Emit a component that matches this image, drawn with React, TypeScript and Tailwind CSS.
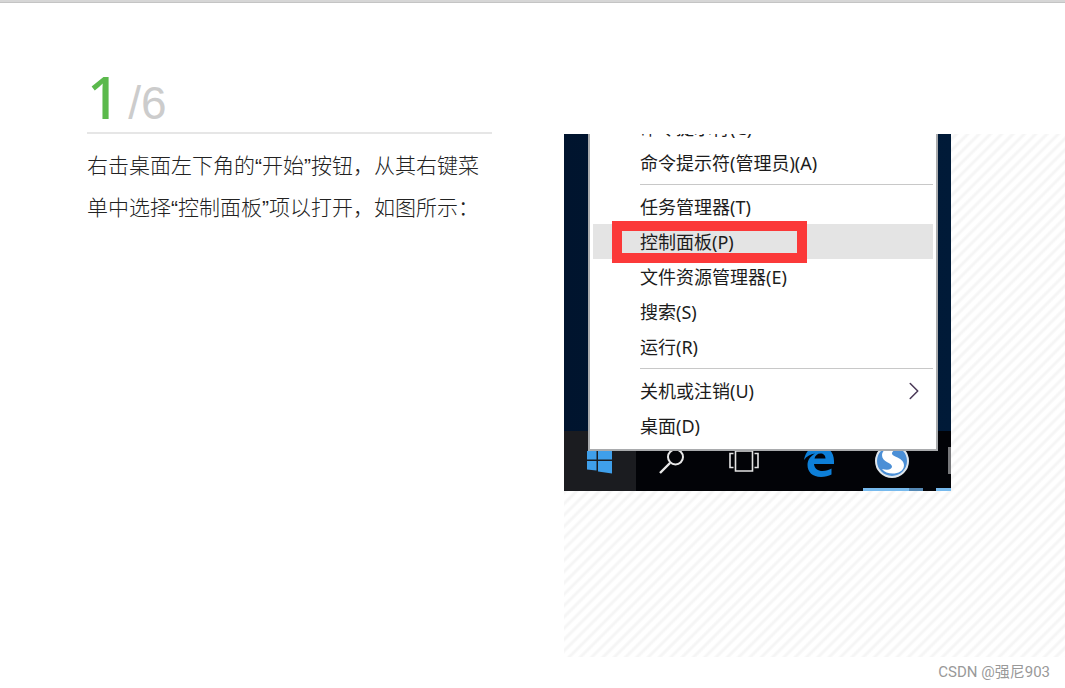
import { clsx } from "clsx";
import { ChevronRight } from "lucide-react";

interface MenuItem {
  label: string;
  active?: boolean;
  submenu?: boolean;
}

const menuGroups: MenuItem[][] = [
  [{ label: "命令提示符(C)" }, { label: "命令提示符(管理员)(A)" }],
  [
    { label: "任务管理器(T)" },
    { label: "控制面板(P)", active: true },
    { label: "文件资源管理器(E)" },
    { label: "搜索(S)" },
    { label: "运行(R)" },
  ],
  [{ label: "关机或注销(U)", submenu: true }, { label: "桌面(D)" }],
];

const WindowsIcon = () => (
  <svg width="26" height="26" viewBox="0 0 26 26" fill="#3f9fea">
    <path d="M0 3 9.500 2v9.500H0zM11 2l14-2v11.500H11zM0 13h9.500v9.500L0 21.500zM11 13h14v12.500l-14-2z" />
  </svg>
);

const SearchIcon = () => (
  <svg width="26" height="26" viewBox="0 0 26 26" fill="none" stroke="#e8e8e8" strokeWidth="2">
    <circle cx="16.5" cy="9" r="7.500" />
    <path d="M11 15 1 25" strokeWidth="2.4" />
  </svg>
);

const TaskViewIcon = () => (
  <svg width="32" height="24" viewBox="0 0 32 24" fill="none" stroke="#e4e4e4" strokeWidth="1.6">
    <path d="M7.500 2h17v20h-17zM5.500 4.500H2v14h3.500M26.500 4.500H30v14h-3.500" />
  </svg>
);

const EdgeIcon = () => (
  <svg width="32" height="32" viewBox="0 0 32 32" fill="#0d7fd8">
    <path d="M1 15C2.500 6 8.500 1 16 1c9 0 15 6 15 15v3H11c.3 4.500 4 7 8.500 7 3.500 0 6.500-1 9-2.500v6C25.500 31 22 32 18 32 9.500 32 4.500 27 4.500 20c0-5 3-9 7.500-11.500C7.500 9 4 11 1 15zm10.500-1.500h11c0-3-2-5-5-5s-5.500 2-6 5z" />
  </svg>
);

const SogouIcon = () => (
  <svg width="36" height="36" viewBox="0 0 36 36">
    <circle cx="18" cy="18" r="16" fill="#4b8fd6" stroke="#dfe6ec" strokeWidth="2" />
    <path
      d="M28 7C21 2.500 8.500 4 8 12c-.3 7 10 7.500 10 11.500 0 3-4 4-10 2.500 5 7 21.500 6 22-3.500.3-8-12-8.500-12-12 0-3 5-5 10-3.500z"
      fill="#fff"
    />
  </svg>
);

const taskbarItems = [
  { name: "开始", icon: WindowsIcon, className: "w-[72px] bg-[#1b1c20]" },
  { name: "搜索", icon: SearchIcon, className: "w-[72px]" },
  { name: "任务视图", icon: TaskViewIcon, className: "w-[72px]" },
  { name: "Edge", icon: EdgeIcon, className: "w-[78px]" },
  { name: "搜狗", icon: SogouIcon, className: "w-[68px]" },
];

const Taskbar = () => (
  <div className="relative flex h-[60px] overflow-hidden bg-[#020307]">
    {taskbarItems.map((item) => (
      <button
        key={item.name}
        type="button"
        aria-label={item.name}
        className={clsx("flex shrink-0 items-center justify-center", item.className)}
      >
        <item.icon />
      </button>
    ))}
    {/* Running app indicators */}
    <div className="absolute bottom-0 left-[299px] flex h-[3px]">
      <span className="w-[46px] bg-[#76b9ed]" />
      <span className="w-[14px] bg-[#5588b4]" />
      <span className="ml-[13px] w-4 bg-[#76b9ed]" />
    </div>
    <span className="absolute right-0 top-4 h-[27px] w-[3px] bg-[#77787b]" />
  </div>
);

const ContextMenu = () => (
  <div className="absolute left-6 right-[13px] top-0 flex h-[317px] flex-col justify-end overflow-hidden border-x-2 border-b-2 border-[#a9abad] bg-white px-[3px] pb-[6px] font-['Noto_Sans','Noto_Sans_CJK_SC',sans-serif] text-lg text-[#1c1c1c]">
    {menuGroups.map((group, index) => (
      <div key={index} className="shrink-0">
        {index > 0 && <hr className="my-1 ml-[47px] border-[#c8c8c8]" />}
        {group.map((item) => (
          <button
            key={item.label}
            type="button"
            className={clsx(
              "relative flex h-[35px] w-full items-center justify-between pl-[47px] pr-2 text-left leading-none",
              item.active && "bg-[#e4e4e4]"
            )}
          >
            {item.label}
            {item.submenu && <ChevronRight size={30} strokeWidth={1.25} className="-mr-1 text-[#4b3a58]" />}
            {item.active && (
              <span className="absolute -top-[3px] left-[19px] h-[42px] w-[195px] border-10 border-[#fb3939]" />
            )}
          </button>
        ))}
      </div>
    ))}
  </div>
);

const App = () => {
  return (
    <div className="min-h-screen bg-white font-['Liberation_Sans','Noto_Sans_CJK_SC',sans-serif]">
      <div className="h-[3px] border-b border-[#c4c4c4] bg-[#d6d6d6]" />

      <main className="flex pl-[87px]">
        {/* Step text */}
        <section className="w-[405px] shrink-0 pt-16">
          <h1 className="flex h-[67px] items-baseline border-b-2 border-[#e6e6e6] leading-[60px]">
            <span className="font-['Noto_Sans',sans-serif] text-[58px] font-medium text-[#5bb94c]">1</span>
            <span className="ml-2 text-[46px] text-[#cccccc]">/6</span>
          </h1>
          <p className="mt-[11px] text-[21px] font-light leading-[42px] text-[#222222]">
            右击桌面左下角的“开始”按钮，从其右键菜单中选择“控制面板”项以打开，如图所示：
          </p>
        </section>

        {/* Step picture */}
        <section className="ml-[72px] mt-[131px] min-h-[523px] flex-1 bg-[repeating-linear-gradient(135deg,#ffffff_0px,#ffffff_3px,#f5f5f5_5px,#f5f5f5_6px,#ffffff_8px)]">
          <div className="relative w-[387px] overflow-hidden">
            <div className="h-[297px] bg-linear-to-r from-[#00142e] to-[#001a38]" />
            <Taskbar />
            <ContextMenu />
          </div>
        </section>
      </main>

      <footer className="flex justify-end pr-[15px] pt-[3px] font-['Roboto','Noto_Sans_CJK_SC',sans-serif] text-[15px] leading-6 text-[#999999]">
        CSDN @强尼903
      </footer>
    </div>
  );
};

export default App;
